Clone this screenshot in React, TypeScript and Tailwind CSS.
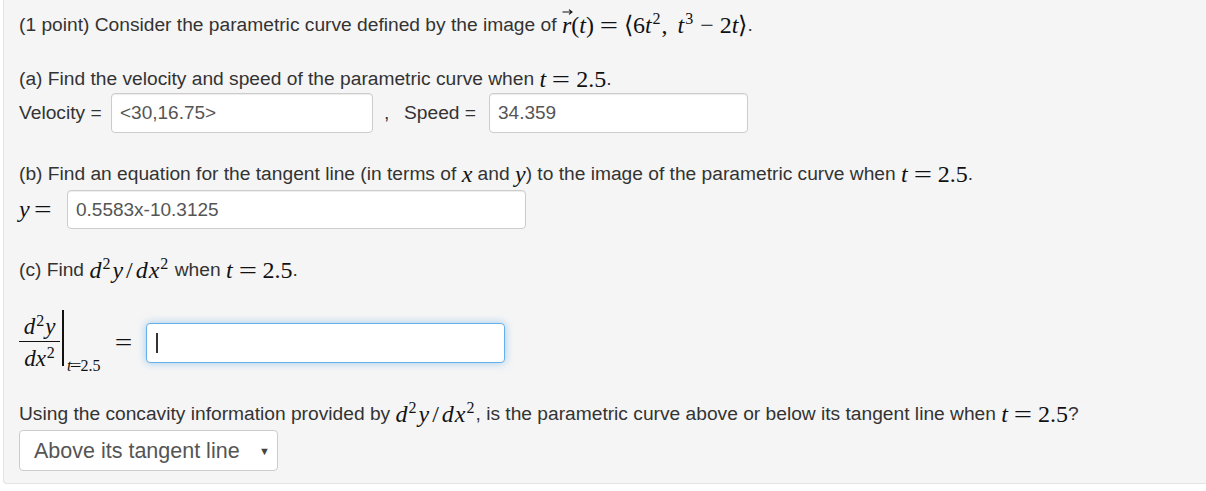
import React from "react";

function Math({ children }: { children: React.ReactNode }) {
  return (
    <span className="font-['Liberation_Serif',serif] text-[24px] text-[#111] whitespace-nowrap">{children}</span>
  );
}

const Sup = ({ children }: { children: React.ReactNode }) => (
  <span className="relative -top-[9px] text-[16px] leading-none ml-[1px] mr-[1px]">{children}</span>
);

const Eq = () => (
  <span className="mx-[6px] inline-block w-[18px] text-center scale-x-[1.35]">=</span>
);

function Input({ value, w, h, focused }: { value?: string; w: string; h: string; focused?: boolean }) {
  return (
    <div
      className={
        "rounded-[4px] bg-white flex items-center px-[8px] text-[19px] text-[#555] " +
        w +
        " " +
        h +
        (focused
          ? " border border-[#66afe9] shadow-[0_0_8px_rgba(102,175,233,0.6)]"
          : " border border-[#ccc] shadow-[inset_0_1px_1px_rgba(0,0,0,0.075)]")
      }
    >
      {focused ? <span className="w-[2px] h-[20px] bg-[#333] ml-[1px]" /> : value}
    </div>
  );
}

function D2() {
  return (
    <Math>
      <i>d</i>
      <Sup>2</Sup>
      <i className="ml-[1px]">y</i>
      <span className="mx-[3px]">/</span>
      <i>d</i>
      <i className="ml-[1px]">x</i>
      <Sup>2</Sup>
    </Math>
  );
}

function T25() {
  return (
    <Math>
      <i>t</i>
      <Eq />
      2.5
    </Math>
  );
}

export default function App() {
  return (
    <div className="w-[1206px] h-[491px] overflow-hidden bg-white font-['Liberation_Sans',Arial,sans-serif] text-[#333]">
      <div className="ml-[3px] w-[1215px] h-[484px] bg-[#f5f5f5] border-l border-b border-[#e3e3e3] rounded-bl-[4px] pl-[15px] pt-[12px] text-[19.2px] leading-[26px]">
        <div className="h-[26px] flex items-center whitespace-nowrap">
          (1 point) Consider the parametric curve defined by the image of&nbsp;
          <Math>
            <span className="relative italic">
              r
              <svg className="absolute left-[0px] -top-[3px]" width="11" height="6" viewBox="0 0 11 6">
                <path d="M0.5 3 H10 M7 0.6 L10 3 L7 5.4" stroke="#111" strokeWidth="1.1" fill="none" />
              </svg>
            </span>
            (<i>t</i>)
            <Eq />
            ⟨6<i>t</i>
            <Sup>2</Sup>, <i className="ml-[4px]">t</i>
            <Sup>3</Sup>
            <span className="mx-[6px]">−</span>2<i>t</i>⟩
          </Math>
          .
        </div>

        <div className="h-[26px] flex items-center mt-[28px] whitespace-nowrap">
          (a) Find the velocity and speed of the parametric curve when&nbsp;
          <T25 />.
        </div>
        <div className="flex items-center mt-[1px]">
          <span className="w-[92px] whitespace-nowrap">Velocity =</span>
          <Input value="<30,16.75>" w="w-[262px]" h="h-[40px]" />
          <span className="ml-[11px] w-[20px]">,</span>
          <span className="w-[85px] whitespace-nowrap">Speed =</span>
          <Input value="34.359" w="w-[259px]" h="h-[40px]" />
        </div>

        <div className="h-[26px] flex items-center mt-[28px] whitespace-nowrap">
          (b) Find an equation for the tangent line (in terms of&nbsp;
          <Math>
            <i>x</i>
          </Math>
          &nbsp;and&nbsp;
          <Math>
            <i>y</i>
          </Math>
          ) to the image of the parametric curve when&nbsp;
          <T25 />.
        </div>
        <div className="flex items-center mt-[3px]">
          <span className="w-[48px]">
            <Math>
              <i>y</i>
              <span className="ml-[6px] inline-block scale-x-[1.3]">=</span>
            </Math>
          </span>
          <Input value="0.5583x-10.3125" w="w-[459px]" h="h-[39px]" />
        </div>

        <div className="h-[26px] flex items-center mt-[28px] whitespace-nowrap">
          (c) Find&nbsp;
          <D2 />
          &nbsp;when&nbsp;
          <T25 />.
        </div>

        <div className="flex items-center mt-[31px] h-[58px]">
          <div className="flex items-center font-['Liberation_Serif',serif] text-[#111]">
            <div className="flex flex-col items-center text-[23px] leading-[22px] w-[41px]">
              <span className="italic pb-[3px] whitespace-nowrap">
                d<span className="relative -top-[8px] text-[16px] not-italic leading-none ml-[1px] mr-[1px]">2</span>y
              </span>
              <span className="w-[41px] h-[1.5px] bg-[#111]" />
              <span className="italic pt-[6px] whitespace-nowrap">
                dx<span className="relative -top-[8px] text-[16px] not-italic leading-none ml-[1px]">2</span>
              </span>
            </div>
            <div className="relative h-[58px] w-[54px] ml-[2px]">
              <span className="absolute left-0 top-[-4px] w-[1.5px] h-[56px] bg-[#111]" />
              <span className="absolute left-[5px] bottom-[-7px] text-[16px] whitespace-nowrap">
                <i>t</i>
                <span className="inline-block scale-x-[1.3]">=</span>2.5
              </span>
            </div>
          </div>
          <span className="w-[30px] pl-[1px] font-['Liberation_Serif',serif] text-[23px] text-[#111]">
            <span className="inline-block scale-x-[1.35]">=</span>
          </span>
          <Input focused w="w-[359px]" h="h-[40px]" />
        </div>

        <div className="h-[26px] flex items-center mt-[29px] whitespace-nowrap">
          Using the concavity information provided by&nbsp;
          <D2 />, is the parametric curve above or below its tangent line when&nbsp;
          <T25 />?
        </div>
        <div className="mt-[3px] w-[259px] h-[41px] rounded-[4px] border border-[#ccc] bg-white flex items-center pl-[14px] pr-[7px] text-[21.5px] text-[#555]">
          <span className="flex-1 whitespace-nowrap">Above its tangent line</span>
          <span className="text-[11px] text-[#444]">▼</span>
        </div>
      </div>
    </div>
  );
}
